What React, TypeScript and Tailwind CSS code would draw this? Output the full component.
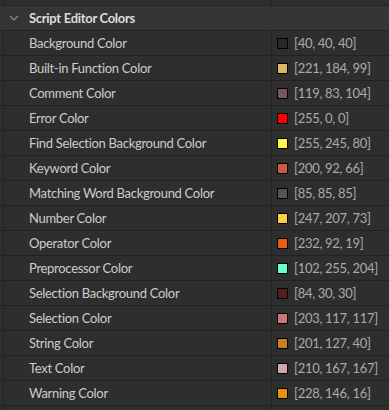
import React from "react";

const rows: [string, number[]][] = [
  ["Background Color", [40, 40, 40]],
  ["Built-in Function Color", [221, 184, 99]],
  ["Comment Color", [119, 83, 104]],
  ["Error Color", [255, 0, 0]],
  ["Find Selection Background Color", [255, 245, 80]],
  ["Keyword Color", [200, 92, 66]],
  ["Matching Word Background Color", [85, 85, 85]],
  ["Number Color", [247, 207, 73]],
  ["Operator Color", [232, 92, 19]],
  ["Preprocessor Color", [102, 255, 204]],
  ["Selection Background Color", [84, 30, 30]],
  ["Selection Color", [203, 117, 117]],
  ["String Color", [201, 127, 40]],
  ["Text Color", [210, 167, 167]],
  ["Warning Color", [228, 146, 16]],
];

function Row({ label, rgb }: { label: string; rgb: number[] }) {
  return (
    <div className="flex h-[25px] border-b border-[#222222]">
      <div className="w-[3px] shrink-0 bg-[#2e2e2e] border-r border-[#222222] box-content" />
      <div className="flex w-[267px] shrink-0 items-center pl-[25px] text-[#cccccc]">
        {label}
      </div>
      <div className="flex flex-1 items-center border-l border-[#222222] pl-[5px] text-[#aaaaaa]">
        <div
          className="h-[11px] w-[11px] border border-black"
          style={{ backgroundColor: `rgb(${rgb[0]}, ${rgb[1]}, ${rgb[2]})` }}
        />
        <span className="ml-[6px]">[{rgb.join(", ")}]</span>
      </div>
    </div>
  );
}

export default function App() {
  return (
    <div
      className="h-[410px] w-[389px] overflow-hidden bg-[#2e2e2e] text-[13px] leading-none tracking-[-0.3px]"
      style={{ fontFamily: "Lato, 'Noto Sans', sans-serif" }}
    >
      <div className="flex h-[6px] border-b border-[#222222]">
        <div className="w-[3px] shrink-0 border-r border-[#222222] box-content" />
        <div className="w-[267px] shrink-0" />
        <div className="flex-1 border-l border-[#222222]" />
      </div>
      <div className="flex h-[25px] items-center border-b border-[#222222] bg-[#353535]">
        <svg width="10" height="6" viewBox="0 0 10 6" className="ml-[9px]">
          <path d="M1 1 L5 5 L9 1" stroke="#8a8a8a" strokeWidth="1.2" fill="none" />
        </svg>
        <span className="ml-[10px] font-bold text-[#dddddd]">Script Editor Colors</span>
      </div>
      {rows.map(([l, c]) => (
        <Row key={l} label={l} rgb={c} />
      ))}
      <div className="flex h-[10px]">
        <div className="w-[3px] shrink-0 border-r border-[#222222] box-content" />
        <div className="w-[267px] shrink-0" />
        <div className="flex-1 border-l border-[#222222]" />
      </div>
    </div>
  );
}
